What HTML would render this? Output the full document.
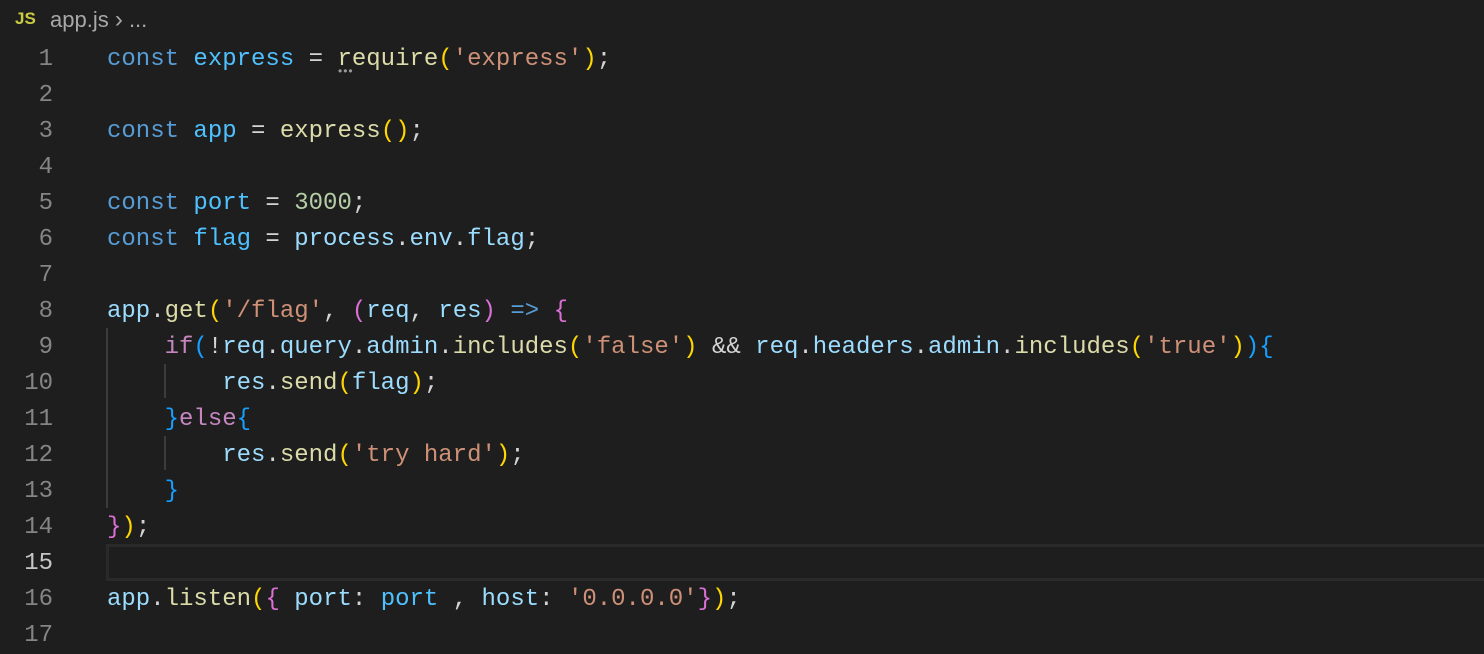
<!DOCTYPE html>
<html><head><meta charset="utf-8"><style>
html,body{margin:0;padding:0;background:#1e1e1e;width:1484px;height:654px;overflow:hidden;}
.hdr{position:absolute;top:0;left:0;height:40px;width:1484px;font-family:"Liberation Sans",sans-serif;font-size:22px;color:#a8a8a8;}
.js{position:absolute;left:15px;top:9px;font-size:17px;font-weight:bold;color:#cbcb41;}
.fn{position:absolute;left:50px;top:6px;}
.ln{position:absolute;left:0;width:53px;text-align:right;font-family:"Liberation Mono",monospace;font-size:24px;color:#858585;line-height:36px;}
.code{position:absolute;left:107px;font-family:"Liberation Mono",monospace;font-size:24px;line-height:36px;color:#d4d4d4;white-space:pre;}
.k{color:#569cd6}.v{color:#4fc1ff}.p{color:#9cdcfe}.f{color:#dcdcaa}.s{color:#ce9178}.n{color:#b5cea8}
.y{color:#ffd700}.m{color:#da70d6}.b{color:#179fff}.c{color:#c586c0}
.guide{position:absolute;width:2px;background:#3c3c3c;}
.cur{position:absolute;left:106px;top:544px;width:1384px;height:37px;border:3px solid #2a2a2a;box-sizing:border-box;}
.dots{position:absolute;left:338px;top:64px;font-size:12px;color:#999;letter-spacing:1px;font-family:"Liberation Sans",sans-serif;}
</style></head><body>
<div class="hdr"><span class="js">JS</span><span class="fn">app.js <span style="font-size:24px">&#x203A;</span> ...</span></div>
<div class="cur"></div>
<div class="guide" style="left:106px;top:328px;height:180px"></div>
<div class="guide" style="left:164px;top:364px;height:34px"></div>
<div class="guide" style="left:164px;top:436px;height:34px"></div>
<div class="ln" style="top:42px">1<br>2<br>3<br>4<br>5<br>6<br>7<br>8<br>9<br>10<br>11<br>12<br>13<br>14<br><span style="color:#c6c6c6">15</span><br>16<br>17</div>
<div class="code" style="top:42px"><span class="k">const</span> <span class="v">express</span> = <span class="f">require</span><span class="y">(</span><span class="s">'express'</span><span class="y">)</span>;

<span class="k">const</span> <span class="v">app</span> = <span class="f">express</span><span class="y">()</span>;

<span class="k">const</span> <span class="v">port</span> = <span class="n">3000</span>;
<span class="k">const</span> <span class="v">flag</span> = <span class="p">process</span>.<span class="p">env</span>.<span class="p">flag</span>;

<span class="p">app</span>.<span class="f">get</span><span class="y">(</span><span class="s">'/flag'</span>, <span class="m">(</span><span class="p">req</span>, <span class="p">res</span><span class="m">)</span> <span class="k">=&gt;</span> <span class="m">{</span>
    <span class="c">if</span><span class="b">(</span>!<span class="p">req</span>.<span class="p">query</span>.<span class="p">admin</span>.<span class="f">includes</span><span class="y">(</span><span class="s">'false'</span><span class="y">)</span> &amp;&amp; <span class="p">req</span>.<span class="p">headers</span>.<span class="p">admin</span>.<span class="f">includes</span><span class="y">(</span><span class="s">'true'</span><span class="y">)</span><span class="b">){</span>
        <span class="p">res</span>.<span class="f">send</span><span class="y">(</span><span class="p">flag</span><span class="y">)</span>;
    <span class="b">}</span><span class="c">else</span><span class="b">{</span>
        <span class="p">res</span>.<span class="f">send</span><span class="y">(</span><span class="s">'try hard'</span><span class="y">)</span>;
    <span class="b">}</span>
<span class="m">}</span><span class="y">)</span>;

<span class="p">app</span>.<span class="f">listen</span><span class="y">(</span><span class="m">{</span> <span class="p">port</span>: <span class="v">port</span> , <span class="p">host</span>: <span class="s">'0.0.0.0'</span><span class="m">}</span><span class="y">)</span>;
</div>
<div class="dots">•••</div>
</body></html>
